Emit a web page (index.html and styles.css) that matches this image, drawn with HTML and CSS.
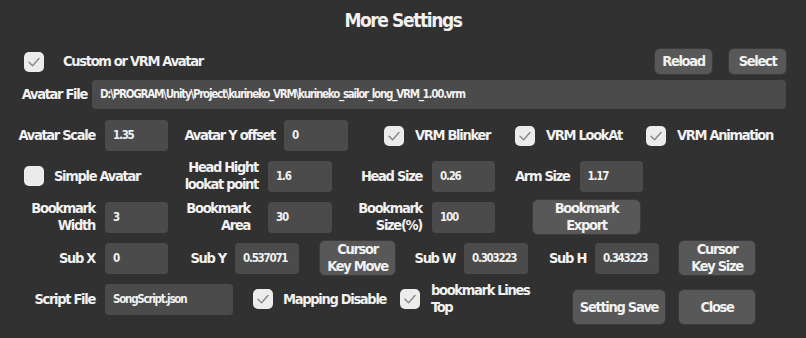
FILE: index.html
```html
<!DOCTYPE html>
<html>
<head>
<meta charset="utf-8">
<link rel="stylesheet" href="styles.css">
</head>
<body>
<div class="panel">
  <div class="title">More Settings</div>

  <div class="row r1">
    <span class="chk on"><svg viewBox="0 0 20 20"><path d="M5 10.2 L8.6 13.8 L15 6.6"/></svg></span>
    <span class="clabel ml19">Custom or VRM Avatar</span>
    <span class="grow"></span>
    <button class="btn w59">Reload</button>
    <button class="btn w59 ml15">Select</button>
  </div>

  <div class="row r2">
    <span class="lbl w87">Avatar File</span>
    <span class="inp ml5 w694">D:\PROGRAM\Unity\Project\kurineko_VRM\kurineko_sailor_long_VRM_1.00.vrm</span>
  </div>

  <div class="row r3">
    <span class="lbl w95">Avatar Scale</span>
    <span class="inp ml10 w63">1.35</span>
    <span class="lbl w107">Avatar Y offset</span>
    <span class="inp ml9 w64">0</span>
    <span class="cgroup ml36 w131">
      <span class="chk on"><svg viewBox="0 0 20 20"><path d="M5 10.2 L8.6 13.8 L15 6.6"/></svg></span>
      <span class="clabel">VRM Blinker</span>
    </span>
    <span class="cgroup w131">
      <span class="chk on"><svg viewBox="0 0 20 20"><path d="M5 10.2 L8.6 13.8 L15 6.6"/></svg></span>
      <span class="clabel">VRM LookAt</span>
    </span>
    <span class="cgroup">
      <span class="chk on"><svg viewBox="0 0 20 20"><path d="M5 10.2 L8.6 13.8 L15 6.6"/></svg></span>
      <span class="clabel">VRM Animation</span>
    </span>
  </div>

  <div class="row r4">
    <span class="cgroup ml24 w140 g10">
      <span class="chk"></span>
      <span class="clabel">Simple Avatar</span>
    </span>
    <span class="lbl w94 two">Head Hight<br>lookat point</span>
    <span class="inp ml10 w64">1.6</span>
    <span class="lbl w90">Head Size</span>
    <span class="inp ml10 w63">0.26</span>
    <span class="lbl ml20">Arm Size</span>
    <span class="inp ml10 w63">1.17</span>
  </div>

  <div class="row r5">
    <span class="lbl w95 two">Bookmark<br>Width</span>
    <span class="inp ml10 w63">3</span>
    <span class="lbl w82 two">Bookmark<br>Area</span>
    <span class="inp ml18 w64">30</span>
    <span class="lbl w90 two">Bookmark<br>Size(%)</span>
    <span class="inp ml10 w63">100</span>
    <button class="btn two ml37 w109 h36">Bookmark<br>Export</button>
  </div>

  <div class="row r6">
    <span class="lbl w95">Sub X</span>
    <span class="inp ml10 w63">0</span>
    <span class="lbl w58">Sub Y</span>
    <span class="inp ml9 w64">0.537071</span>
    <button class="btn two ml20 w77 h36">Cursor<br>Key Move</button>
    <span class="lbl w59">Sub W</span>
    <span class="inp ml9 w64">0.303223</span>
    <span class="lbl w58">Sub H</span>
    <span class="inp ml9 w64">0.343223</span>
    <button class="btn two ml19 w78 h36">Cursor<br>Key Size</button>
  </div>

  <div class="row r7">
    <span class="lbl w95">Script File</span>
    <span class="inp ml10 w128">SongScript.json</span>
    <span class="cgroup ml20 w147 g10">
      <span class="chk on"><svg viewBox="0 0 20 20"><path d="M5 10.2 L8.6 13.8 L15 6.6"/></svg></span>
      <span class="clabel">Mapping Disable</span>
    </span>
    <span class="cgroup w172">
      <span class="chk on"><svg viewBox="0 0 20 20"><path d="M5 10.2 L8.6 13.8 L15 6.6"/></svg></span>
      <span class="clabel two">bookmark Lines<br>Top</span>
    </span>
    <button class="btn low w94">Setting Save</button>
    <button class="btn low ml12 w78">Close</button>
  </div>
</div>
</body>
</html>
```

FILE: styles.css
```css
html, body {
  margin: 0;
  padding: 0;
  background: #313131;
}
body {
  width: 806px;
  height: 338px;
  overflow: hidden;
  font-family: "DejaVu Sans Condensed", "Liberation Sans", sans-serif;
  font-weight: bold;
  color: #f1f1f1;
  font-size: 14.5px;
  letter-spacing: -1.3px;
}
.panel {
  display: flex;
  flex-direction: column;
  width: 806px;
  height: 338px;
  background: #313131;
}
.title {
  height: 40px;
  line-height: 40px;
  text-align: center;
  font-size: 19px;
  letter-spacing: -1.4px;
}
.row {
  display: flex;
  align-items: center;
}
.r1 { margin-top: 8px; height: 27px; }
.r2 { margin-top: 5px; height: 29px; }
.r3 { margin-top: 11px; height: 31px; }
.r4 { margin-top: 8px; height: 34px; }
.r5 { margin-top: 6px; height: 36px; }
.r6 { margin-top: 5px; height: 36px; }
.r7 { margin-top: 7px; height: 32px; }

.grow { flex: 1; }

.lbl {
  flex: none;
  text-align: right;
  white-space: nowrap;
  line-height: 17px;
}
.clabel {
  white-space: nowrap;
  line-height: 17px;
}
.two { line-height: 17px; }

.inp {
  flex: none;
  box-sizing: border-box;
  height: 31px;
  line-height: 31px;
  background: #4b4b4b;
  border-radius: 4px;
  padding-left: 8px;
  font-size: 11.5px;
  letter-spacing: -1.25px;
  white-space: nowrap;
  overflow: hidden;
}
.r2 .inp { height: 29px; line-height: 29px; }

.btn {
  flex: none;
  box-sizing: border-box;
  height: 27px;
  padding: 0;
  background: #585858;
  border: 1px solid #3b3b3b;
  border-radius: 6px;
  color: #f1f1f1;
  font-family: inherit;
  font-weight: bold;
  font-size: 14.5px;
  letter-spacing: -1.3px;
  line-height: 17px;
  text-align: center;
}
.h36 { height: 36px; }
.low { align-self: flex-start; margin-top: 6px; height: 36px; }

.cgroup {
  flex: none;
  display: flex;
  align-items: center;
  gap: 11px;
}
.g10 { gap: 10px; }

.chk {
  flex: none;
  width: 20px;
  height: 20px;
  background: #ececec;
  border-radius: 5px;
  display: flex;
}
.chk svg {
  width: 20px;
  height: 20px;
}
.chk path {
  fill: none;
  stroke: #8a8a8a;
  stroke-width: 1.5;
  stroke-linecap: round;
  stroke-linejoin: round;
}
.r1 .chk { margin-left: 24px; }

.ml5 { margin-left: 5px; }
.ml9 { margin-left: 9px; }
.ml10 { margin-left: 10px; }
.ml12 { margin-left: 12px; }
.ml15 { margin-left: 15px; }
.ml18 { margin-left: 18px; }
.ml19 { margin-left: 19px; }
.ml20 { margin-left: 20px; }
.ml24 { margin-left: 24px; }
.ml36 { margin-left: 36px; }
.ml37 { margin-left: 37px; }

.w58 { width: 58px; }
.w59 { width: 59px; }
.w63 { width: 63px; }
.w64 { width: 64px; }
.w77 { width: 77px; }
.w78 { width: 78px; }
.w82 { width: 82px; }
.w87 { width: 87px; }
.w90 { width: 90px; }
.w94 { width: 94px; }
.w95 { width: 95px; }
.w107 { width: 107px; }
.w109 { width: 109px; }
.w128 { width: 128px; }
.w131 { width: 131px; }
.w140 { width: 140px; }
.w147 { width: 147px; }
.w172 { width: 172px; }
.w694 { width: 694px; }
.r1 .btn.w59:last-child { margin-right: 19px; }
```
